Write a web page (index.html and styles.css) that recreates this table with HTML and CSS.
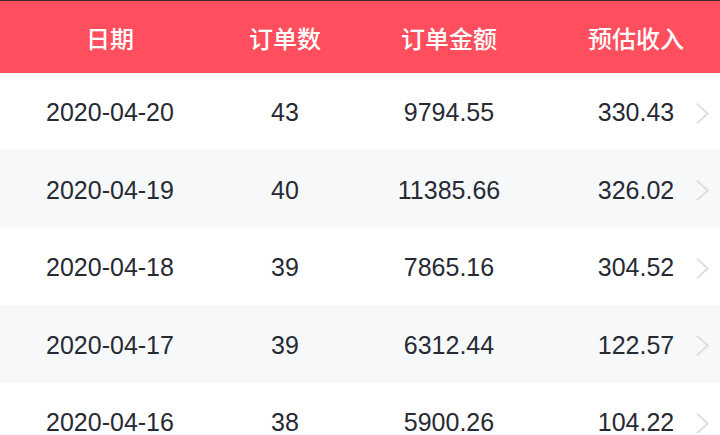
FILE: index.html
```html
<!DOCTYPE html>
<html lang="zh">
<head>
<meta charset="utf-8">
<link rel="stylesheet" href="styles.css">
</head>
<body>
<div class="topbar"></div>
<div class="table">
  <div class="row head">
    <div class="cell">日期</div>
    <div class="cell">订单数</div>
    <div class="cell">订单金额</div>
    <div class="cell last">预估收入</div>
  </div>
  <div class="row">
    <div class="cell">2020-04-20</div>
    <div class="cell">43</div>
    <div class="cell">9794.55</div>
    <div class="cell last">330.43</div>
    <svg class="chev" viewBox="0 0 16 24"><path d="M2 1.5 L13.5 12 L2 22.5" /></svg>
  </div>
  <div class="row alt">
    <div class="cell">2020-04-19</div>
    <div class="cell">40</div>
    <div class="cell">11385.66</div>
    <div class="cell last">326.02</div>
    <svg class="chev" viewBox="0 0 16 24"><path d="M2 1.5 L13.5 12 L2 22.5" /></svg>
  </div>
  <div class="row">
    <div class="cell">2020-04-18</div>
    <div class="cell">39</div>
    <div class="cell">7865.16</div>
    <div class="cell last">304.52</div>
    <svg class="chev" viewBox="0 0 16 24"><path d="M2 1.5 L13.5 12 L2 22.5" /></svg>
  </div>
  <div class="row alt">
    <div class="cell">2020-04-17</div>
    <div class="cell">39</div>
    <div class="cell">6312.44</div>
    <div class="cell last">122.57</div>
    <svg class="chev" viewBox="0 0 16 24"><path d="M2 1.5 L13.5 12 L2 22.5" /></svg>
  </div>
  <div class="row">
    <div class="cell">2020-04-16</div>
    <div class="cell">38</div>
    <div class="cell">5900.26</div>
    <div class="cell last">104.22</div>
    <svg class="chev" viewBox="0 0 16 24"><path d="M2 1.5 L13.5 12 L2 22.5" /></svg>
  </div>
</div>
</body>
</html>
```
FILE: styles.css
```css
html, body {
  margin: 0;
  padding: 0;
  background: #ffffff;
}
body {
  width: 720px;
  height: 435px;
  overflow: hidden;
  font-family: "Liberation Sans", "Noto Sans CJK SC", sans-serif;
  color: #272a33;
}
.topbar {
  height: 1px;
  background: #3b2c2a;
}
.table {
  display: flex;
  flex-direction: column;
}
.row {
  position: relative;
  display: grid;
  grid-template-columns: 220px 130px 198px 1fr;
  align-items: center;
  height: 77px;
  font-size: 25px;
  padding-top: 2px;
  box-sizing: border-box;
}
.row.alt {
  background: #f6f8fa;
  height: 78px;
}
.cell {
  text-align: center;
  white-space: nowrap;
}
.cell.last {
  padding-left: 4px;
}
.row.head {
  height: 72px;
  padding-top: 0;
  background: #ff4f5e;
  color: #ffffff;
  font-family: "Noto Sans CJK SC", sans-serif;
  font-weight: 500;
  font-size: 24px;
}
.chev {
  position: absolute;
  right: 10px;
  top: 50%;
  margin-top: -10px;
  width: 15px;
  height: 23px;
  fill: none;
  stroke: #dcdde1;
  stroke-width: 2;
}
```
